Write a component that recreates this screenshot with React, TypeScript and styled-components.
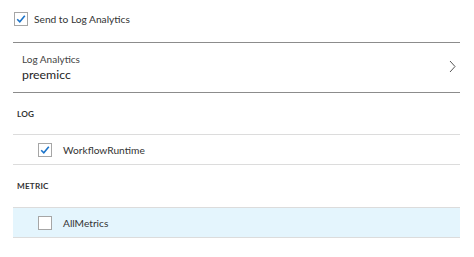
import styled, { createGlobalStyle } from "styled-components";

const GlobalStyle = createGlobalStyle`
    body {
        margin: 0;
        background: #ffffff;
        font-family: Lato, "Open Sans", sans-serif;
        color: #222222;
    }
`;

const Page = styled.div`
    width: 447px;
    margin-left: 13px;
    display: flex;
    flex-direction: column;
`;

const TopRow = styled.label`
    display: flex;
    align-items: flex-start;
    height: 30px;
    padding: 12px 0 0 1px;
    gap: 6px;
    font-size: 10.2px;
    line-height: 15px;
    color: #333333;
`;

const Box = styled.span<{ $checked?: boolean }>`
    width: 12px;
    height: 12px;
    border: 1px solid #a6a6a6;
    background: #ffffff;
    display: flex;
    align-items: center;
    justify-content: center;
    flex-shrink: 0;
`;

const Picker = styled.div`
    display: flex;
    align-items: center;
    justify-content: space-between;
    height: 49px;
    border-top: 1px solid #8c8c8c;
    border-bottom: 1px solid #8c8c8c;
    padding: 0 4px 0 9px;
`;

const PickerText = styled.div`
    display: flex;
    flex-direction: column;
    margin-top: -1px;
`;

const PickerLabel = styled.span`
    font-size: 10px;
    color: #444444;
    line-height: 14px;
`;

const PickerValue = styled.span`
    font-size: 12.3px;
    color: #1e1e1e;
    line-height: 17px;
`;

const Chevron = styled.svg`
    margin-top: -3px;
`;

const SectionHeader = styled.div<{ $height: number }>`
    height: ${(p) => p.$height}px;
    display: flex;
    align-items: center;
    padding-left: 4px;
    font-size: 8.2px;
    font-weight: 700;
    letter-spacing: 0.2px;
    color: #333333;
`;

const Row = styled.label<{ $selected?: boolean }>`
    display: flex;
    align-items: center;
    gap: 11px;
    height: 29px;
    padding-left: 25px;
    font-size: 10.2px;
    color: #333333;
    background: ${(p) => (p.$selected ? "#e4f5fd" : "#ffffff")};
    border-top: 1px solid #dcdcdc;
    border-bottom: 1px solid #dcdcdc;
`;

function Check({ checked }: { checked?: boolean }) {
    return (
        <Box $checked={checked}>
            {checked && (
                <svg width="10" height="10" viewBox="0 0 10 10">
                    <path
                        d="M1.2 5.2 L3.8 7.8 L8.8 1.8"
                        fill="none"
                        stroke="#1a73c9"
                        strokeWidth="1.6"
                    />
                </svg>
            )}
        </Box>
    );
}

function App() {
    return (
        <Page>
            <GlobalStyle />
            <TopRow>
                <Check checked />
                Send to Log Analytics
            </TopRow>
            <Picker>
                <PickerText>
                    <PickerLabel>Log Analytics</PickerLabel>
                    <PickerValue>preemicc</PickerValue>
                </PickerText>
                <Chevron width="7" height="13" viewBox="0 0 7 13">
                    <path d="M1 1 L6 6.5 L1 12" fill="none" stroke="#555555" strokeWidth="1" />
                </Chevron>
            </Picker>
            <SectionHeader $height={41}>LOG</SectionHeader>
            <Row>
                <Check checked />
                WorkflowRuntime
            </Row>
            <SectionHeader $height={42}>METRIC</SectionHeader>
            <Row $selected>
                <Check />
                AllMetrics
            </Row>
        </Page>
    );
}

export default App;
